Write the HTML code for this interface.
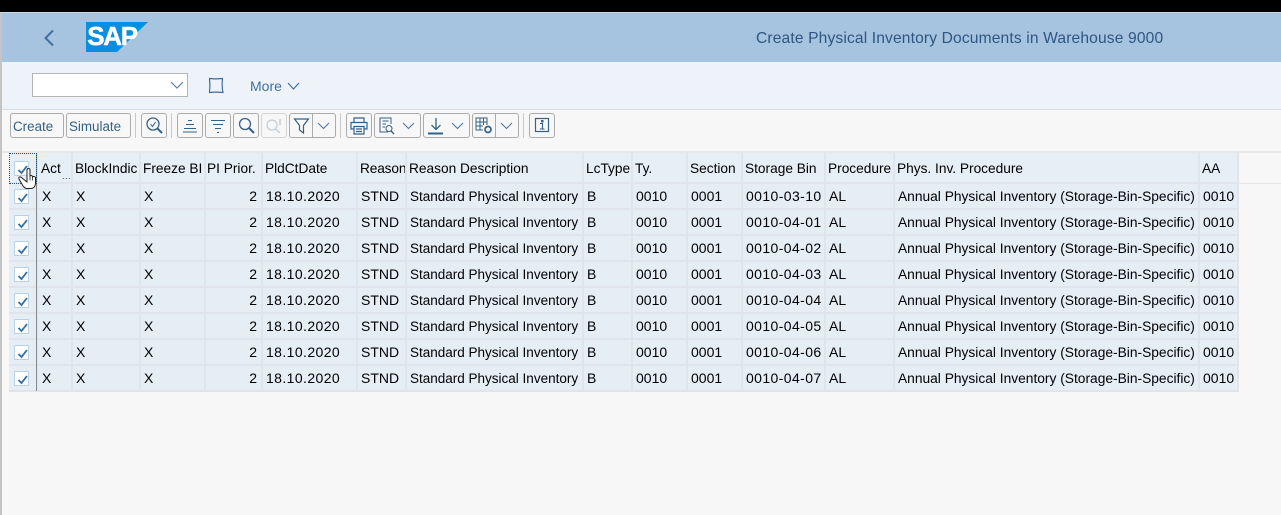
<!DOCTYPE html>
<html><head><meta charset="utf-8"><style>
html,body{margin:0;padding:0}
body{width:1281px;height:515px;overflow:hidden;background:#f7f7f7;position:relative;font-family:"Liberation Sans",Arial,sans-serif;color:#000}
.a{position:absolute}
.btn{position:absolute;top:113px;height:25px;box-sizing:border-box;border:1px solid #ababab;border-radius:3px;background:#f7f7f7;color:#346187;font-size:13.400px;line-height:25px;text-align:left;padding-left:2px;white-space:nowrap}
.btn svg{position:absolute;left:0;top:0}
.sep{position:absolute;top:113px;width:1px;height:25px;background:#c8c8c8}
table{position:absolute;left:9px;top:153px;border-collapse:collapse;table-layout:fixed;width:1229px;font-size:14px}
td,th{padding:0 0 0 3px;overflow:hidden;white-space:nowrap;box-sizing:border-box;font-weight:normal;text-align:left;background:#e5edf5;border-right:2px solid #dfe5ea;border-bottom:2px solid #dfe5ea}
th{height:30px;background:#e6eef6;padding:2px 0 0 2px;font-size:13.700px}
th:nth-child(2){padding-left:3px}
th:nth-child(5){padding-left:1px}
th:nth-child(6){padding-left:2px}
th:nth-child(7){letter-spacing:-.15px}
td{height:26px}
td:nth-child(2){padding-left:4px}
td:nth-child(8){font-size:13.500px}
td:nth-child(14){font-size:13.780px}
td:nth-child(6),td:nth-child(12){letter-spacing:.4px}
td.r{text-align:right;padding-right:4px}
td.s,th.s{padding:0;position:relative}
.cb{position:absolute;left:5px;top:5px;width:15px;height:15px;box-sizing:border-box;background:#fff;border:1px solid #bcd0e4;border-radius:1px}
.cb svg{position:absolute;left:1px;top:1px}
</style></head><body>
<div class="a" style="left:0;top:0;width:1281px;height:12px;background:#000"></div>
<div class="a" style="left:0;top:12px;width:1281px;height:1px;background:#d0d8e0"></div>
<div class="a" style="left:0;top:13px;width:1281px;height:49px;background:#a6c3df"></div>
<div class="a" style="left:0;top:62px;width:1281px;height:47px;background:#eef3fa"></div>
<div class="a" style="left:0;top:109px;width:1281px;height:1px;background:#d5dde5"></div>
<div class="a" style="left:0;top:151px;width:1281px;height:2px;background:#e8e8e8"></div>
<div class="a" style="left:0;top:13px;width:2px;height:502px;background:#c4c4c4"></div>

<svg class="a" style="left:40px;top:26px" width="20" height="24"><path d="M13 4.500L5.500 12L13 19.500" fill="none" stroke="#41709d" stroke-width="2"/></svg>
<svg class="a" style="left:86px;top:22px" width="62" height="30"><path d="M0 0H62L31 30H0Z" fill="#0a8fe0"/></svg>
<div class="a" style="left:86px;top:21px;font-size:26px;line-height:30px;font-weight:bold;color:#fff;letter-spacing:-1.300px;width:52px;text-align:center;-webkit-text-stroke:.5px #fff">SAP</div>
<div class="a" style="left:756px;top:29px;font-size:15.600px;line-height:20px;color:#2f5680;white-space:nowrap;letter-spacing:.14px">Create Physical Inventory Documents in Warehouse 9000</div>

<div class="a" style="left:32px;top:73px;width:156px;height:24px;box-sizing:border-box;background:#fff;border:1px solid #b5b5b5"></div>
<svg class="a" style="left:169px;top:80px" width="16" height="10"><path d="M2 2L8 8L14 2" fill="none" stroke="#5b7fa3" stroke-width="1.200"/></svg>
<svg class="a" style="left:207px;top:77px" width="18" height="19"><path d="M2.500 1.500C6 2 11 2 15.500 1.500C15 6 15 11 16 15.500C11 15 6 15 2.500 15.500C3 11 3 6 2.500 1.500Z" fill="none" stroke="#3f6c98" stroke-width="1.200"/></svg>
<div class="a" style="left:250px;top:77px;font-size:14px;line-height:18px;color:#41709d">More</div>
<svg class="a" style="left:286px;top:81px" width="15" height="10"><path d="M2 2L7.500 8L13 2" fill="none" stroke="#41709d" stroke-width="1.200"/></svg>

<div class="btn" style="left:10px;width:54px">Create</div>
<div class="btn" style="left:66px;width:65px">Simulate</div>
<div class="sep" style="left:135px"></div>
<div class="btn" style="left:141px;width:26px"><svg width="24" height="23"><circle cx="11" cy="10" r="6" fill="none" stroke="#346187" stroke-width="1.300"/><path d="M15.500 14.500L20 19" stroke="#346187" stroke-width="2"/><path d="M8.500 10L10.500 12.500L13.500 8" fill="none" stroke="#346187"/></svg></div>
<div class="sep" style="left:171px"></div>
<div class="btn" style="left:177px;width:26px"><svg width="24" height="23"><path d="M10 6.500H14M8 10.500H16M6 14.500H18M5 18H19" stroke="#346187" fill="none"/></svg></div>
<div class="btn" style="left:205px;width:26px"><svg width="24" height="23"><path d="M5 6.500H19M7 10.500H17M9 14.500H15M11 18.500H13" stroke="#346187" fill="none"/></svg></div>
<div class="btn" style="left:233px;width:26px"><svg width="24" height="23"><circle cx="11" cy="10" r="5.500" fill="none" stroke="#346187" stroke-width="1.300"/><path d="M15 14L20 19" stroke="#346187" stroke-width="2"/></svg></div>
<div class="btn" style="left:261px;width:26px;border-color:#d4d4d4"><svg width="24" height="23"><circle cx="10" cy="11" r="5" fill="none" stroke="#c4ced6" stroke-width="1.300"/><path d="M13.500 15L18 19M18 5V11" stroke="#c4ced6" stroke-width="1.500"/></svg></div>
<div class="btn" style="left:289px;width:47px"><svg width="45" height="23"><path d="M4.500 5H18.500L13.500 11.500V19L9.500 16V11.500Z" fill="none" stroke="#346187" stroke-width="1.200"/><path d="M22.500 0V23" stroke="#ababab"/><path d="M28 9L33.500 14.500L39 9" fill="none" stroke="#4d7aa5" stroke-width="1.100"/></svg></div>
<div class="sep" style="left:340px"></div>
<div class="btn" style="left:346px;width:26px"><svg width="24" height="23"><path d="M7 8V4H17V8M7 15H4V8.500H20V15H17M7 12.500H17V20H7ZM9 15H15M9 17.500H15" fill="none" stroke="#346187" stroke-width="1.200"/></svg></div>
<div class="btn" style="left:374px;width:47px"><svg width="45" height="23"><path d="M13 18H5V4H16V10M7.500 7H13.500M7.500 10H11M7.500 13H10" fill="none" stroke="#346187"/><circle cx="14" cy="14.500" r="3" fill="none" stroke="#346187"/><path d="M16 17L19 20" stroke="#346187" stroke-width="1.300"/><path d="M28 9L33.500 14.500L39 9" fill="none" stroke="#4d7aa5" stroke-width="1.100"/></svg></div>
<div class="btn" style="left:423px;width:47px"><svg width="45" height="23"><path d="M12 4V15M7.500 11L12 15.500L16.500 11" fill="none" stroke="#346187" stroke-width="1.300"/><path d="M4 19.500H19" stroke="#346187" stroke-width="2"/><path d="M28 9L33.500 14.500L39 9" fill="none" stroke="#4d7aa5" stroke-width="1.100"/></svg></div>
<div class="btn" style="left:472px;width:47px"><svg width="45" height="23"><path d="M14 11V4H3V16H10M3 8H14M3 12H10M7 4V16M10.500 4V11" fill="none" stroke="#346187"/><circle cx="15" cy="15.500" r="3" fill="none" stroke="#346187" stroke-width="1.700"/><path d="M22.500 0V23" stroke="#ababab"/><path d="M28 9L33.500 14.500L39 9" fill="none" stroke="#4d7aa5" stroke-width="1.100"/></svg></div>
<div class="sep" style="left:523px"></div>
<div class="btn" style="left:529px;width:26px"><svg width="24" height="23"><rect x="5.500" y="4.500" width="13" height="13" fill="none" stroke="#346187" stroke-width="1.200"/><path d="M10 9.500H12.500V15M9.800 15H14.500M11.500 6.500H13V8H11.500Z" fill="none" stroke="#346187" stroke-width="1.100"/></svg></div>

<table>
<colgroup><col style="width:28px"><col style="width:35px"><col style="width:68px"><col style="width:65px"><col style="width:57px"><col style="width:95px"><col style="width:49px"><col style="width:177px"><col style="width:49px"><col style="width:55px"><col style="width:55px"><col style="width:83px"><col style="width:69px"><col style="width:305px"><col style="width:39px"></colgroup>
<tr><th class="s"><div class="cb" style="top:8px"><svg width="13" height="13"><path d="M2.500 7L5.500 10L11 3" fill="none" stroke="#346e9e" stroke-width="1.800"/></svg></div></th><th>Act</th><th>BlockIndic</th><th>Freeze BI</th><th>PI Prior.</th><th>PldCtDate</th><th>Reason</th><th>Reason Description</th><th>LcType</th><th>Ty.</th><th>Section</th><th>Storage Bin</th><th>Procedure</th><th>Phys. Inv. Procedure</th><th>AA</th></tr>
<tr><td class="s"><div class="cb"><svg width="13" height="13"><path d="M2.500 7L5.500 10L11 3" fill="none" stroke="#346e9e" stroke-width="1.800"/></svg></div></td><td>X</td><td>X</td><td>X</td><td class="r">2</td><td>18.10.2020</td><td>STND</td><td>Standard Physical Inventory</td><td>B</td><td>0010</td><td>0001</td><td>0010-03-10</td><td>AL</td><td>Annual Physical Inventory (Storage-Bin-Specific)</td><td>0010</td></tr>
<tr><td class="s"><div class="cb"><svg width="13" height="13"><path d="M2.500 7L5.500 10L11 3" fill="none" stroke="#346e9e" stroke-width="1.800"/></svg></div></td><td>X</td><td>X</td><td>X</td><td class="r">2</td><td>18.10.2020</td><td>STND</td><td>Standard Physical Inventory</td><td>B</td><td>0010</td><td>0001</td><td>0010-04-01</td><td>AL</td><td>Annual Physical Inventory (Storage-Bin-Specific)</td><td>0010</td></tr>
<tr><td class="s"><div class="cb"><svg width="13" height="13"><path d="M2.500 7L5.500 10L11 3" fill="none" stroke="#346e9e" stroke-width="1.800"/></svg></div></td><td>X</td><td>X</td><td>X</td><td class="r">2</td><td>18.10.2020</td><td>STND</td><td>Standard Physical Inventory</td><td>B</td><td>0010</td><td>0001</td><td>0010-04-02</td><td>AL</td><td>Annual Physical Inventory (Storage-Bin-Specific)</td><td>0010</td></tr>
<tr><td class="s"><div class="cb"><svg width="13" height="13"><path d="M2.500 7L5.500 10L11 3" fill="none" stroke="#346e9e" stroke-width="1.800"/></svg></div></td><td>X</td><td>X</td><td>X</td><td class="r">2</td><td>18.10.2020</td><td>STND</td><td>Standard Physical Inventory</td><td>B</td><td>0010</td><td>0001</td><td>0010-04-03</td><td>AL</td><td>Annual Physical Inventory (Storage-Bin-Specific)</td><td>0010</td></tr>
<tr><td class="s"><div class="cb"><svg width="13" height="13"><path d="M2.500 7L5.500 10L11 3" fill="none" stroke="#346e9e" stroke-width="1.800"/></svg></div></td><td>X</td><td>X</td><td>X</td><td class="r">2</td><td>18.10.2020</td><td>STND</td><td>Standard Physical Inventory</td><td>B</td><td>0010</td><td>0001</td><td>0010-04-04</td><td>AL</td><td>Annual Physical Inventory (Storage-Bin-Specific)</td><td>0010</td></tr>
<tr><td class="s"><div class="cb"><svg width="13" height="13"><path d="M2.500 7L5.500 10L11 3" fill="none" stroke="#346e9e" stroke-width="1.800"/></svg></div></td><td>X</td><td>X</td><td>X</td><td class="r">2</td><td>18.10.2020</td><td>STND</td><td>Standard Physical Inventory</td><td>B</td><td>0010</td><td>0001</td><td>0010-04-05</td><td>AL</td><td>Annual Physical Inventory (Storage-Bin-Specific)</td><td>0010</td></tr>
<tr><td class="s"><div class="cb"><svg width="13" height="13"><path d="M2.500 7L5.500 10L11 3" fill="none" stroke="#346e9e" stroke-width="1.800"/></svg></div></td><td>X</td><td>X</td><td>X</td><td class="r">2</td><td>18.10.2020</td><td>STND</td><td>Standard Physical Inventory</td><td>B</td><td>0010</td><td>0001</td><td>0010-04-06</td><td>AL</td><td>Annual Physical Inventory (Storage-Bin-Specific)</td><td>0010</td></tr>
<tr><td class="s"><div class="cb"><svg width="13" height="13"><path d="M2.500 7L5.500 10L11 3" fill="none" stroke="#346e9e" stroke-width="1.800"/></svg></div></td><td>X</td><td>X</td><td>X</td><td class="r">2</td><td>18.10.2020</td><td>STND</td><td>Standard Physical Inventory</td><td>B</td><td>0010</td><td>0001</td><td>0010-04-07</td><td>AL</td><td>Annual Physical Inventory (Storage-Bin-Specific)</td><td>0010</td></tr>
</table>

<div class="a" style="left:36px;top:153px;width:1px;height:238px;background:#8a8a8a"></div>
<div class="a" style="left:9px;top:153px;width:28px;height:31px;box-sizing:border-box;border:1px dotted #1d4f7c"></div>
<div class="a" style="left:62px;top:173px;font-size:9px;line-height:6px;letter-spacing:.5px;color:#333">...</div>
<div class="a" style="left:1238px;top:183px;width:43px;height:1px;background:#e6e6e6"></div>
<svg class="a" style="left:17px;top:165px" width="21" height="26"><path d="M10 5C10 3 13 3 13 5V11C14 10 15.500 10.500 15.500 12C16.500 11 18.500 11.500 18.500 13V18C18.500 21 17 23.500 14 23.500H10C8 23.500 7 22 6 21L2 14C1 12 3.500 11 5 13L10 17Z" fill="#fff" stroke="#222" stroke-width="1"/><path d="M13 11V15.500M15.500 12V15.500" stroke="#222" stroke-width=".8"/></svg>
</body></html>
